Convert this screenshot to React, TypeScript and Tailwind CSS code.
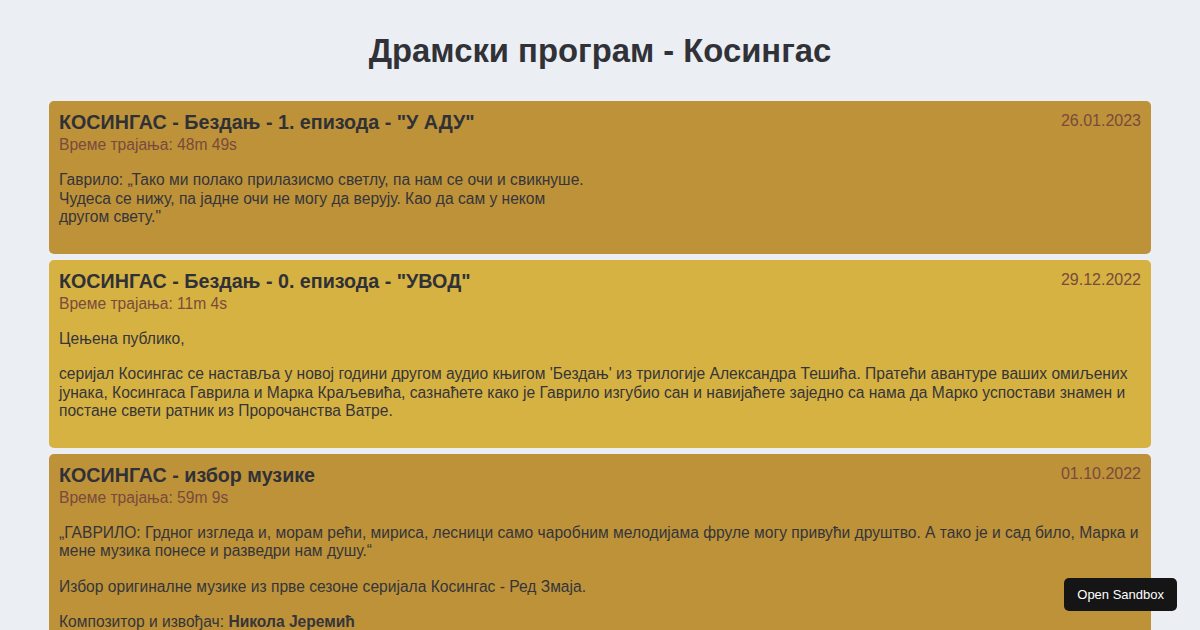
import React from "react";

type Epizoda = {
  naslov: string;
  trajanje: string;
  datum: string;
  boja: string;
  opis: React.ReactNode;
};

const epizode: Epizoda[] = [
  {
    naslov: 'КОСИНГАС - Бездањ - 1. епизода - "У АДУ"',
    trajanje: "48m 49s",
    datum: "26.01.2023",
    boja: "bg-[#bd9239]",
    opis: (
      <p className="my-[17px]">
        Гаврило: „Тако ми полако прилазисмо светлу, па нам се очи и свикнуше.
        <br />
        Чудеса се нижу, па јадне очи не могу да верују. Као да сам у неком
        <br />
        другом свету."
      </p>
    ),
  },
  {
    naslov: 'КОСИНГАС - Бездањ - 0. епизода - "УВОД"',
    trajanje: "11m 4s",
    datum: "29.12.2022",
    boja: "bg-[#d5b242]",
    opis: (
      <>
        <p className="mt-[17px]">Цењена публико,</p>
        <p className="my-[17px]">
          серијал Косингас се наставља у новој години другом аудио књигом 'Бездањ' из трилогије Александра Тешића.
          Пратећи авантуре ваших омиљених јунака, Косингаса Гаврила и Марка Краљевића, сазнаћете како је Гаврило
          изгубио сан и навијаћете заједно са нама да Марко успостави знамен и постане свети ратник из Пророчанства
          Ватре.
        </p>
      </>
    ),
  },
  {
    naslov: "КОСИНГАС - избор музике",
    trajanje: "59m 9s",
    datum: "01.10.2022",
    boja: "bg-[#bd9239]",
    opis: (
      <>
        <p className="mt-[17px]">
          „ГАВРИЛО: Грдног изгледа и, морам рећи, мириса, лесници само чаробним мелодијама фруле могу привући
          друштво. А тако је и сад било, Марка и мене музика понесе и разведри нам душу.“
        </p>
        <p className="mt-[17px]">Избор оригиналне музике из прве сезоне серијала Косингас - Ред Змаја.</p>
        <p className="my-[17px]">
          Композитор и извођач: <strong className="font-bold">Никола Јеремић</strong>
        </p>
      </>
    ),
  },
];

export default function App() {
  return (
    <div className="min-h-screen bg-[#ebeef3] font-['Liberation_Sans',Arial,sans-serif] text-[#333]">
      <div className="mx-auto max-w-[1102px]">
        <h1 className="pt-[32px] pb-[32px] text-center text-[32.8px] font-bold leading-[37px] text-[#313238]">
          Драмски програм - Косингас
        </h1>
        {epizode.map((ep) => (
          <div key={ep.datum} className={`mb-[6px] rounded-[5px] p-[10px] ${ep.boja}`}>
            <div className="flex items-start justify-between">
              <div>
                <h3 className="text-[19.7px] font-bold leading-[23px] text-[#303137]">{ep.naslov}</h3>
                <p className="mt-[2px] text-[15.6px] leading-[18.4px] text-[#7a4a3c]">Време трајања: {ep.trajanje}</p>
              </div>
              <span className="text-[16px] leading-[20px] text-[#7a4a3c]">{ep.datum}</span>
            </div>
            <div className="text-[15.6px] leading-[18.4px] text-[#35353a]">{ep.opis}</div>
          </div>
        ))}
      </div>
      <button className="fixed bottom-[19px] right-[23px] rounded-[5px] bg-[#151515] px-[13px] py-[8px] text-[13px] leading-[17px] text-white font-['Liberation_Sans',Arial,sans-serif]">
        Open Sandbox
      </button>
    </div>
  );
}
